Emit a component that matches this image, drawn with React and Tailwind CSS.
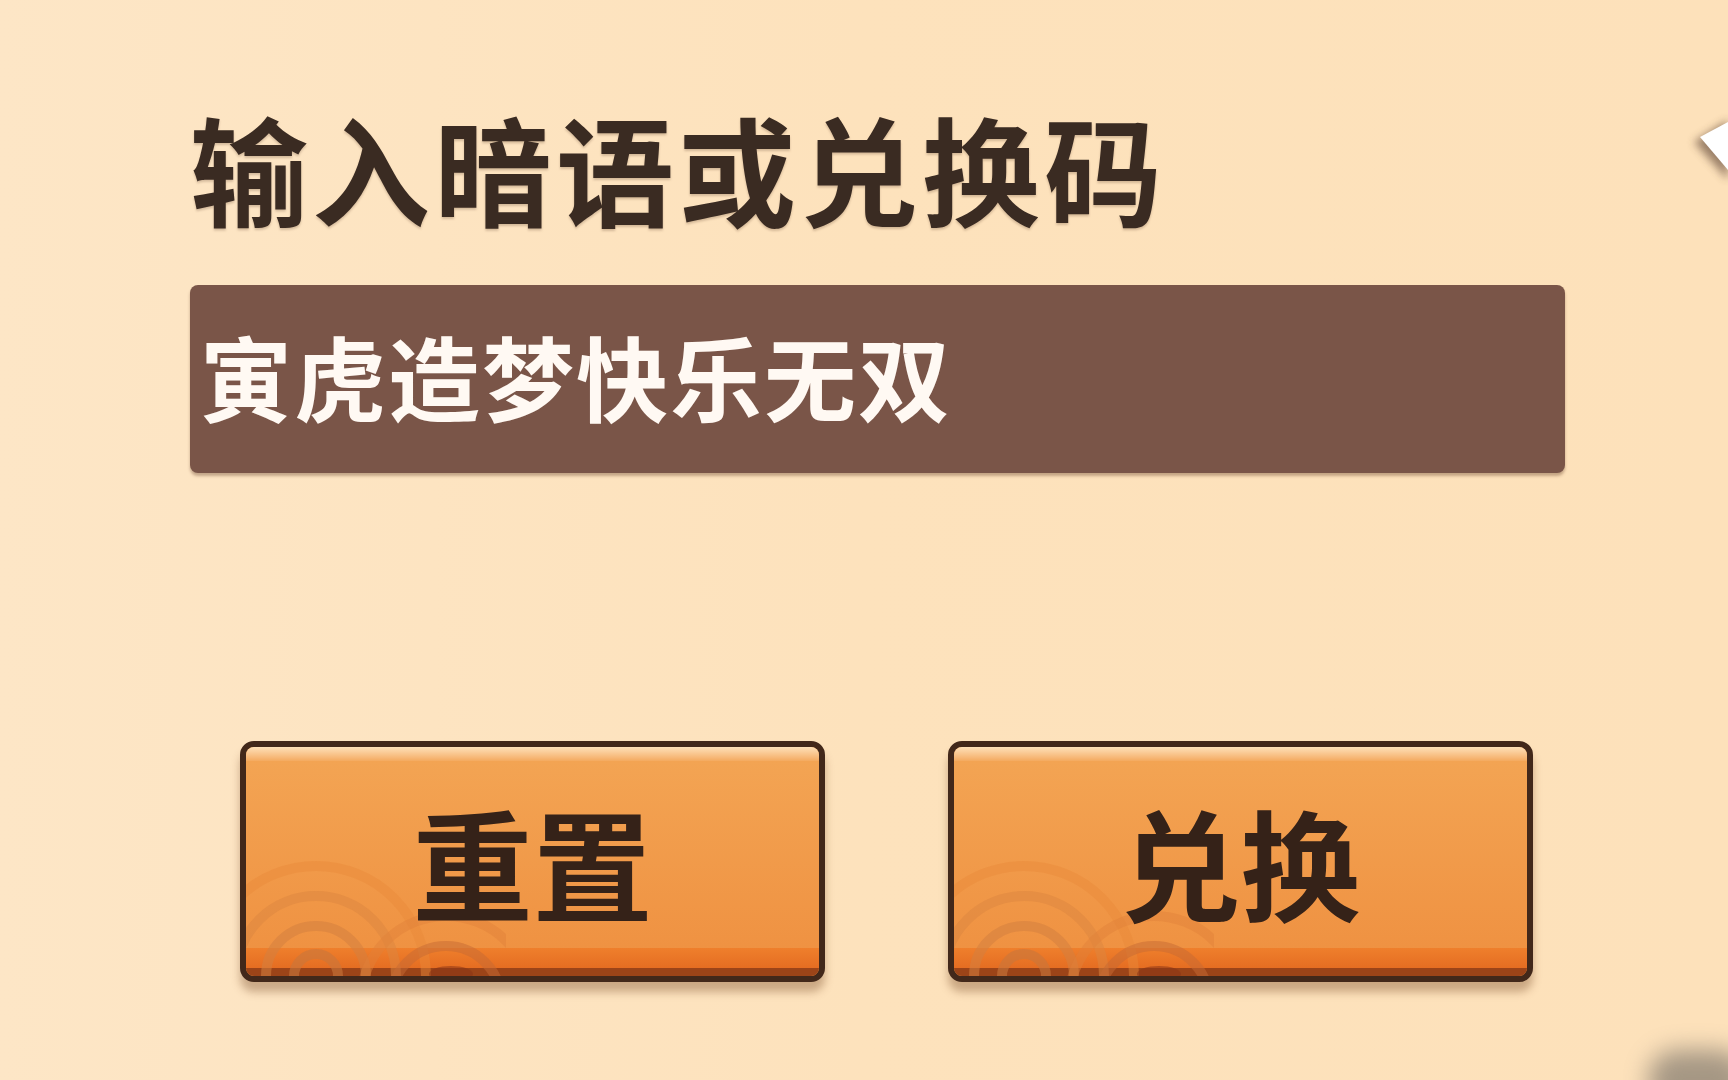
import React from 'react';

const font = { fontFamily: '"Noto Sans CJK SC", "Noto Sans", sans-serif' };

const Waves = () => (
  <svg className="absolute left-0 bottom-0" width="260" height="150" viewBox="0 0 260 150">
    <g fill="none" strokeWidth="10">
      <circle cx="70" cy="150" r="110" stroke="#e8893a" opacity="0.45" />
      <circle cx="70" cy="150" r="80" stroke="#dc8640" opacity="0.5" />
      <circle cx="70" cy="150" r="50" stroke="#d48040" opacity="0.55" />
      <circle cx="70" cy="150" r="22" stroke="#c8763c" opacity="0.6" />
      <circle cx="200" cy="175" r="85" stroke="#e0803a" opacity="0.45" />
      <circle cx="200" cy="175" r="55" stroke="#c56a33" opacity="0.5" />
    </g>
    <ellipse cx="205" cy="148" rx="22" ry="8" fill="#8a3515" opacity="0.55" />
  </svg>
);

const GameButton = ({label}) => (
  <button className="relative w-[585px] h-[241px] rounded-[14px] border-[6px] border-[#42281a] bg-[#ef9641] overflow-hidden shadow-[0_10px_8px_rgba(110,60,25,0.35)] cursor-pointer">
    <div className="absolute inset-0 flex flex-col">
      <div className="h-[14px] bg-gradient-to-b from-[#fde0b8] to-[#f4aa5f]" />
      <div className="flex-1 bg-gradient-to-b from-[#f3a453] to-[#ef9242]" />
      <div className="h-[20px] bg-gradient-to-b from-[#ef7f2c] to-[#e56d22]" />
      <div className="h-[8px] bg-[#9c4418]" />
    </div>
    <Waves />
    <span className="relative block text-[120px] leading-none font-bold text-[#352218] -mt-[2px]" style={font}>
      {label}
    </span>
  </button>
);

const App = () => {
  return (
    <div className="relative w-full h-[1080px] overflow-hidden bg-gradient-to-r from-[#fde6c6] via-[#fde2bc] to-[#fde1ba]" style={font}>
      <div className="flex flex-col pl-[190px] pt-[108px]">
        <h1 className="text-[118px] leading-none font-bold text-[#3a2b22] tracking-[4px] drop-shadow-[0_2px_1px_rgba(90,60,40,0.25)]">
          输入暗语或兑换码
        </h1>

        <div className="mt-[59px] w-[1375px] h-[188px] rounded-[8px] bg-[#7a5548] shadow-[0_3px_3px_rgba(90,50,30,0.35)] flex items-center pl-[10px]">
          <span className="text-[92px] leading-none font-semibold tracking-[2px] text-[#fff9f3] -mt-[8px]">
            寅虎造梦快乐无双
          </span>
        </div>

        <div className="mt-[268px] ml-[50px] flex gap-[123px]">
          <GameButton label="重置" />
          <GameButton label="兑换" />
        </div>
      </div>

      <svg className="absolute right-0 top-[96px]" width="50" height="90" viewBox="0 0 50 90">
        <defs>
          <filter id="sh" x="-50%" y="-50%" width="200%" height="200%">
            <feGaussianBlur stdDeviation="4" />
          </filter>
        </defs>
        <path d="M16 46 L50 24 L50 84 Z" fill="#5a4030" opacity="0.6" filter="url(#sh)" />
        <path d="M22 41 L50 26 L50 74 Z" fill="#ffffff" />
      </svg>

      <div className="absolute -right-[20px] -bottom-[30px] w-[100px] h-[60px] rounded-full bg-[#6b6660] opacity-60 blur-[12px]" />
    </div>
  );
};

export default App;
